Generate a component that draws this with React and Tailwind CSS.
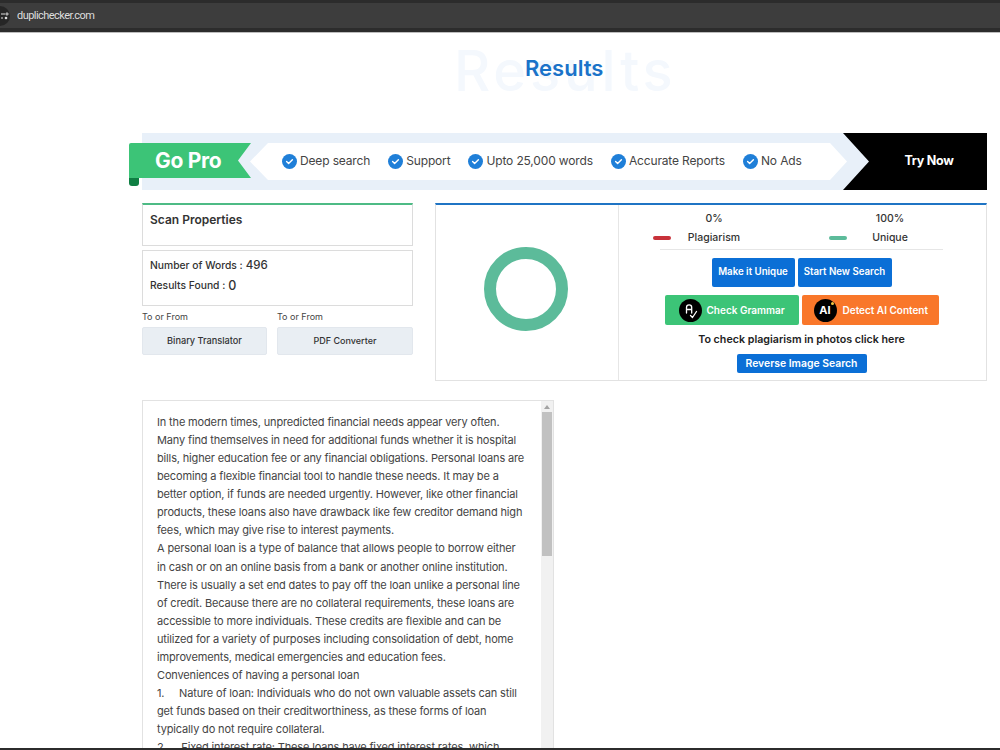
const FEATURES = ['Deep search', 'Support', 'Upto 25,000 words', 'Accurate Reports', 'No Ads']

// lines are broken by hand so the wrapping stays the same as the page
const ARTICLE = [
  'In the modern times, unpredicted financial needs appear very often.',
  'Many find themselves in need for additional funds whether it is hospital',
  'bills, higher education fee or any financial obligations. Personal loans are',
  'becoming a flexible financial tool to handle these needs. It may be a',
  'better option, if funds are needed urgently. However, like other financial',
  'products, these loans also have drawback like few creditor demand high',
  'fees, which may give rise to interest payments.',
  'A personal loan is a type of balance that allows people to borrow either',
  'in cash or on an online basis from a bank or another online institution.',
  'There is usually a set end dates to pay off the loan unlike a personal line',
  'of credit. Because there are no collateral requirements, these loans are',
  'accessible to more individuals. These credits are flexible and can be',
  'utilized for a variety of purposes including consolidation of debt, home',
  'improvements, medical emergencies and education fees.',
  'Conveniences of having a personal loan',
  '1.     Nature of loan: Individuals who do not own valuable assets can still',
  'get funds based on their creditworthiness, as these forms of loan',
  'typically do not require collateral.',
  '2.     Fixed interest rate: These loans have fixed interest rates, which',
]

function CheckBadge() {
  return (
    <svg width="15" height="15" viewBox="0 0 15 15" className="shrink-0">
      <circle cx="7.5" cy="7.5" r="7.5" fill="#1f7fd8" />
      <path d="M4.6 7.6l2 2 3.8-3.9" fill="none" stroke="#fff" strokeWidth="1.4" strokeLinecap="round" strokeLinejoin="round" />
    </svg>
  )
}

function AddressBar() {
  return (
    <div className="h-[33px] shrink-0 bg-[#2c2c2c] pt-[3px] border-b border-b-[#bdbdbd]">
      <div className="h-[25px] bg-[#3d3d3d] flex items-center">
        <div className="w-[10px] h-[20px] rounded-r-full bg-[#262626] flex items-center justify-end pr-[1px]">
          <svg width="8" height="8" viewBox="0 0 8 8">
            <path d="M0 2h4M0 6h2" stroke="#ddd" strokeWidth="1.2" />
            <circle cx="6" cy="2" r="1.1" fill="none" stroke="#ddd" />
            <circle cx="5" cy="6" r="1.3" fill="#ddd" />
          </svg>
        </div>
        <span className="ml-[7px] mt-[1px] font-['Roboto',sans-serif] text-[11px] text-[#dedede] tracking-[-0.55px]">duplichecker.com</span>
      </div>
    </div>
  )
}

function Banner() {
  return (
    <div className="relative ml-[142px] w-[845px] h-[57px] mt-[37px] bg-[#e8f0f9] flex items-center">
      {/* white strip with pointed ends */}
      <div className="absolute left-[108px] top-[10px] w-[597px] h-[37px] bg-white [clip-path:polygon(18px_0,580px_0,100%_50%,580px_100%,18px_100%,0_50%)]" />
      <div className="relative ml-[140px] -mt-[1px] flex items-center gap-[18px] text-[12px] tracking-[-0.15px] text-[#444]">
        {FEATURES.map((f) => (
          <div key={f} className="flex items-center gap-[3px] whitespace-nowrap">
            <CheckBadge />
            <span>{f}</span>
          </div>
        ))}
      </div>
      {/* Go Pro ribbon */}
      <div className="absolute -left-[13px] top-[10px] w-[122px] h-[35px] bg-[#3cc477] rounded-tl-[2px] [clip-path:polygon(0_0,100%_0,109px_50%,100%_100%,0_100%)] flex items-center pl-[26px] pt-[1px] text-white font-bold text-[21px] tracking-[-0.3px]">
        Go Pro
      </div>
      <div className="absolute -left-[13px] top-[45px] w-[10px] h-[8px] bg-[#0f7f43] rounded-b-[3px]" />
      {/* Try Now */}
      <div className="absolute right-0 top-0 w-[144px] h-[57px] bg-black [clip-path:polygon(0_0,100%_0,100%_100%,0_100%,26px_50%)] flex items-center justify-center pl-[30px] pr-[2px] text-white font-bold text-[12.5px] tracking-[-0.3px]">
        Try Now
      </div>
    </div>
  )
}

function LeftColumn() {
  return (
    <div className="w-[271px] shrink-0">
      <div className="h-[43px] border border-[#dcdcdc] border-t-2 border-t-[#4dbb85] px-[7px] pt-[7px] text-[12px] leading-[16px] font-semibold text-[#333]">
        Scan Properties
      </div>
      <div className="mt-[4px] h-[56px] border border-[#dcdcdc] px-[7px] pt-[5px] text-[#333] font-medium">
        <div className="h-[20px] flex items-center text-[10.3px]">
          Number of Words :<span className="ml-[3px] text-[11.5px]">496</span>
        </div>
        <div className="h-[20px] flex items-center text-[10.3px]">
          Results Found :<span className="ml-[3px] text-[12.5px]">0</span>
        </div>
      </div>
      <div className="mt-[3px] flex gap-[10px]">
        <div className="w-[125px]">
          <div className="h-[18px] text-[9px] leading-[16px] text-[#444]">To or From</div>
          <div className="h-[28px] rounded-[2px] border border-[#e2e7ed] bg-[#e9eef3] flex items-center justify-center text-[9.2px] font-medium text-[#333]">
            Binary Translator
          </div>
        </div>
        <div className="w-[136px]">
          <div className="h-[18px] text-[9px] leading-[16px] text-[#444]">To or From</div>
          <div className="h-[28px] rounded-[2px] border border-[#e2e7ed] bg-[#e9eef3] flex items-center justify-center text-[9px] font-medium text-[#333]">
            PDF Converter
          </div>
        </div>
      </div>
    </div>
  )
}

function ResultPanel() {
  return (
    <div className="w-[552px] h-[178px] shrink-0 border border-[#e2e2e2] border-t-2 border-t-[#1f74c4] flex">
      <div className="w-[183px] shrink-0 border-r border-r-[#e6e6e6] flex items-center justify-center">
        <svg width="84" height="84" viewBox="0 0 84 84" className="mt-[-7px] ml-[-2px]">
          <circle cx="42" cy="42" r="36" fill="none" stroke="#5cbb9a" strokeWidth="12" />
        </svg>
      </div>
      <div className="flex-1 pr-[2px] flex flex-col items-center text-[#333]">
        <div className="w-[352px] ml-[1px] grid grid-cols-2 text-center text-[10.5px] font-medium">
          <div className="pt-[6px] leading-[16px]">0%</div>
          <div className="pt-[6px] leading-[16px]">100%</div>
          <div className="relative h-[19px] flex items-center justify-center pt-[3px]">
            <span className="absolute left-[27px] top-[9px] w-[18px] h-[4px] rounded-full bg-[#c8323a]" />
            Plagiarism
          </div>
          <div className="relative h-[19px] flex items-center justify-center pt-[3px]">
            <span className="absolute left-[27px] top-[9px] w-[18px] h-[4px] rounded-full bg-[#5cbb9a]" />
            Unique
          </div>
        </div>
        <div className="w-[283px] mt-[3px] border-t border-t-[#e6e6e6]" />
        <div className="mt-[8px] flex gap-[3px] text-[9.7px] font-semibold text-white">
          <div className="w-[83px] h-[29px] rounded-[2px] bg-[#0b6fd6] flex items-center justify-center">Make it Unique</div>
          <div className="w-[94px] h-[29px] rounded-[2px] bg-[#0b6fd6] flex items-center justify-center">Start New Search</div>
        </div>
        <div className="mt-[8px] flex gap-[3px] text-[10px] font-semibold text-white">
          <div className="w-[134px] h-[30px] rounded-[2px] bg-[#3cc477] flex items-center pl-[14px]">
            <svg width="23" height="23" viewBox="0 0 23 23" className="shrink-0">
              <circle cx="11.5" cy="11.5" r="11.5" fill="#000" />
              <path d="M7.5 14V8.5a2.6 2.6 0 0 1 5.2 0V14M7.5 10.5h5.2M11.5 16.5l2 2 4-6" fill="none" stroke="#fff" strokeWidth="1.3" strokeLinecap="round" strokeLinejoin="round" />
            </svg>
            <span className="ml-[5px]">Check Grammar</span>
          </div>
          <div className="w-[137px] h-[30px] rounded-[2px] bg-[#f9772a] flex items-center pl-[12px]">
            <div className="relative w-[23px] h-[23px] shrink-0 rounded-full bg-black flex items-center justify-center text-[11px] font-bold">
              AI
              <span className="absolute right-[3px] top-[3px] w-[3px] h-[3px] rounded-full bg-[#f5c542]" />
            </div>
            <span className="ml-[6px]">Detect AI Content</span>
          </div>
        </div>
        <div className="mt-[7px] h-[16px] text-[10.7px] leading-[16px] font-semibold text-[#222]">To check plagiarism in photos click here</div>
        <div className="mt-[6px] w-[130px] h-[19px] rounded-[2px] bg-[#0b6fd6] flex items-center justify-center text-[10.4px] font-semibold text-white">
          Reverse Image Search
        </div>
      </div>
    </div>
  )
}

function ArticleBox() {
  return (
    <div className="ml-[142px] mt-[19px] w-[412px] flex-1 min-h-0 border border-[#e2e2e2] border-b-0 flex overflow-hidden">
      <div className="flex-1 min-w-0 pl-[14px] pt-[12px] text-[11px] leading-[18.06px] tracking-[-0.15px] text-[#444]">
        {ARTICLE.map((line) => (
          <div key={line} className="whitespace-pre">{line}</div>
        ))}
      </div>
      <div className="w-[12px] shrink-0 bg-[#f1f1f1] flex flex-col">
        <div className="h-[11px] flex items-center justify-center">
          <div className="w-0 h-0 border-x-[3px] border-x-transparent border-b-[4px] border-b-[#a3a3a3]" />
        </div>
        <div className="h-[144px] mx-[1px] bg-[#c1c1c1]" />
      </div>
    </div>
  )
}

export default function App() {
  return (
    <div className="relative h-[750px] overflow-hidden bg-white flex flex-col font-['Inter',sans-serif]">
      <AddressBar />

      {/* faded heading sitting behind the real one */}
      <div className="absolute left-[454px] top-[33px] text-[56px] leading-[76px] font-medium text-[#f4f8fd] tracking-[3.8px]">Results</div>
      <div className="relative h-[63px] shrink-0 ml-[525px] pt-[19px] text-[22px] leading-[32px] font-semibold text-[#1a73c9]">Results</div>

      <Banner />

      <div className="ml-[142px] mt-[13px] flex gap-[22px] shrink-0">
        <LeftColumn />
        <ResultPanel />
      </div>

      <ArticleBox />
      <div className="absolute left-0 right-0 bottom-0 h-[2px] bg-[#2c2c2c]" />
    </div>
  )
}
